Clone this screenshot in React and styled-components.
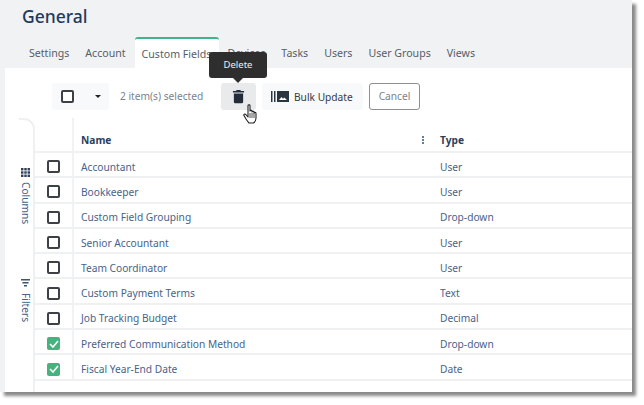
import React from "react";
import styled, { createGlobalStyle } from "styled-components";

const FONT = `"Noto Sans", "Open Sans", sans-serif`;
const Global = createGlobalStyle`
  html, body { margin: 0; padding: 0; background: #fff; }
  body { font-family: ${FONT}; width: 644px; height: 405px; overflow: hidden; }
`;
const Window = styled.div`
  position: relative; width: 632px; height: 392px; background: #f1f2f4;
  box-shadow: 4px 4px 3px #8a8a8a; display: flex; flex-direction: column;
`;
const Header = styled.header`height: 68px; display: flex; flex-direction: column; flex: none;`;
const Title = styled.h1`
  margin: 0; padding: 4px 0 0 22px; height: 33px; box-sizing: border-box;
  font-size: 17.5px; line-height: 25px; font-weight: 500; color: #1f3a5c;
`;
const Tabs = styled.nav`display: flex; padding: 4px 0 0 21px; height: 31px;`;
const Tab = styled.div`
  box-sizing: border-box; height: 31px; padding: 8px 8px 0; font-size: 10.6px; line-height: 16px;
  color: #565d68; white-space: nowrap;
  ${p => p.$active && `background:#fff; border-top:2px solid #3fb58a; border-radius:3px 3px 0 0; padding:7px 0 0 7px; width:84px; margin:0 1px 0 1px; overflow:hidden;`}
`;
const Body = styled.main`flex: 1; margin-left: 5px; background: #fff; display: flex; flex-direction: column; min-height: 0;`;
const Toolbar = styled.div`display: flex; align-items: center; height: 27px; margin: 15px 0 8px 47px; flex: none;`;
const SelectBox = styled.div`
  width: 57px; height: 27px; background: #f8f9fa; border-radius: 3px; display: flex; align-items: center;
  padding-left: 9px; box-sizing: border-box;
`;
const Caret = styled.span`
  margin-left: 21px; width: 0; height: 0; border-left: 3px solid transparent; border-right: 3px solid transparent; border-top: 3px solid #222;
`;
const Selected = styled.span`margin: 0 17px 0 11px; font-size: 10.2px; color: #7b828c; white-space: nowrap; width: 84px; position: relative; top: -1px;`;
const IconBtn = styled.button`
  width: 35px; height: 27px; border: 0; padding: 0; background: #e9eaec; border-radius: 3px; display: flex; align-items: center; justify-content: center;
`;
const BulkBtn = styled.button`
  margin-left: 6px; width: 101px; height: 27px; border: 0; background: #f8f9fa; border-radius: 3px; display: flex; align-items: center; gap: 5px;
  padding: 0 0 0 9px; font: 10.2px ${FONT}; color: #333b47; white-space: nowrap;
`;
const CancelBtn = styled.button`
  margin-left: 6px; width: 51px; height: 27px; box-sizing: border-box; border: 1px solid #8d8f93; border-radius: 3px; background: #fff; padding: 0 0 2px;
  font: 10.2px ${FONT}; color: #7b828c;
`;
const Content = styled.div`flex: 1; display: flex; min-height: 0;`;
const Side = styled.aside`
  position: relative; width: 30px; flex: none; box-sizing: border-box; border-right: 2px solid #eff0f2; margin-top: 12px;
  display: flex; flex-direction: column; align-items: center; padding: 38px 0 0 12px; gap: 55px;
  &::before {
    content: ""; position: absolute; right: -2px; top: -12px; width: 16px; height: 12px; box-sizing: border-box;
    border-top: 2px solid #eff0f2; border-right: 2px solid #eff0f2; border-top-right-radius: 11px;
  }
`;
const SideItem = styled.div`
  writing-mode: vertical-rl; font-size: 10.2px; line-height: 11px; display: flex; align-items: center; gap: ${p => p.$gap}px; color: #47638a;
`;
const TableWrap = styled.div`flex: 1; min-width: 0;`;
const Row = styled.div`
  display: grid; grid-template-columns: 39px 366px 1fr; height: ${p => p.$h || 25.3}px; box-sizing: border-box; border-bottom: 2px solid #eff0f2;
  font-size: 10.2px; color: #47638a;
  font-weight: ${p => p.$head ? 700 : 400};
  & > div { display: flex; align-items: center; padding-top: ${p => p.$pt || 4}px; box-sizing: border-box; white-space: nowrap; }
`;
const CheckCell = styled.div`justify-content: center; border-right: 2px solid #f1f2f4;`;
const NameCell = styled.div`padding-left: 7px; padding-right: 16px; justify-content: space-between; ${p => p.$head && "color:#2b3f5c;"}`;
const TypeCell = styled.div`${p => p.$head && "color:#2b3f5c;"}`;
const Box = styled.span`
  width: 13px; height: 13px; box-sizing: border-box; border-radius: 2px; display: inline-flex; align-items: center; justify-content: center; flex: none;
  ${p => p.$on ? "background:#46b37f;" : "border:2px solid #3d4045; background:#fff;"}
`;
const Kebab = styled.span`display: flex; flex-direction: column; gap: 1px; i { width: 2px; height: 2px; background: #39506f; border-radius: 50%; display: block; }`;
const Tooltip = styled.div`
  position: absolute; left: 209px; top: 52px; width: 58px; height: 26px; background: #2e2e2e; border-radius: 3px; color: #eee; font-size: 9.5px;
  display: flex; align-items: center; justify-content: center; padding-bottom: 2px; box-sizing: border-box;
  &::after { content: ""; position: absolute; left: 24px; top: 26px; border-left: 5px solid transparent; border-right: 5px solid transparent; border-top: 5px solid #2e2e2e; }
`;
const Cursor = styled.svg`position: absolute; left: 243px; top: 104px;`;

const rows = [
  ["Accountant", "User"], ["Bookkeeper", "User"], ["Custom Field Grouping", "Drop-down"], ["Senior Accountant", "User"],
  ["Team Coordinator", "User"], ["Custom Payment Terms", "Text"], ["Job Tracking Budget", "Decimal"],
  ["Preferred Communication Method", "Drop-down", true], ["Fiscal Year-End Date", "Date", true],
];

export default function App() {
  return (
    <>
      <Global />
      <Window>
        <Header>
          <Title>General</Title>
          <Tabs>
            <Tab>Settings</Tab>
            <Tab>Account</Tab>
            <Tab $active>Custom Fields</Tab>
            <Tab>Devices</Tab>
            <Tab>Tasks</Tab>
            <Tab>Users</Tab>
            <Tab>User Groups</Tab>
            <Tab>Views</Tab>
          </Tabs>
        </Header>
        <Body>
          <Toolbar>
            <SelectBox><Box /><Caret /></SelectBox>
            <Selected>2 item(s) selected</Selected>
            <IconBtn aria-label="Delete">
              <svg width="13" height="15" viewBox="0 0 14 15"><path d="M5 0.500h4l.7 1.200H13v1.600H1V1.700h3.300zM2 4.300h10v9.200c0 .7-.5 1.200-1.200 1.200H3.200c-.7 0-1.200-.5-1.200-1.200z" fill="#232d3a"/></svg>
            </IconBtn>
            <BulkBtn>
              <svg width="18" height="12" viewBox="0 0 18 12"><path d="M0 0h1.500v11H0zM3 0h1.500v11H3zM6 0h12v11H6z" fill="#2c3440"/><path d="M8 9l2.500-3 1.500 1.700 1.200-1.200L16 9z" fill="#fff"/></svg>
              Bulk Update
            </BulkBtn>
            <CancelBtn>Cancel</CancelBtn>
          </Toolbar>
          <Content>
            <Side>
              <SideItem $gap={5}>
                <svg width="9" height="9" viewBox="0 0 11 11" fill="#2f4058">{[0,4,8].flatMap(x => [0,4,8].map(y => <rect key={`${x}${y}`} x={x} y={y} width="3" height="3" />))}</svg>
                Columns
              </SideItem>
              <SideItem $gap={6}>
                <svg width="9" height="8" viewBox="0 0 9 8" fill="#3f5470"><rect x="0" y="0" width="9" height="1.500" /><rect x="1.500" y="3" width="6" height="1.500" /><rect x="3" y="6" width="3" height="1.500" /></svg>
                Filters
              </SideItem>
            </Side>
            <TableWrap>
              <Row $head $h={35} $pt={10}>
                <CheckCell />
                <NameCell $head>Name<Kebab><i /><i /><i /></Kebab></NameCell>
                <TypeCell $head>Type</TypeCell>
              </Row>
              {rows.map(([n, t, on]) => (
                <Row key={n}>
                  <CheckCell>
                    <Box $on={on}>{on && <svg width="10" height="8" viewBox="0 0 10 8"><path d="M1 4l3 3 5-6" stroke="#fff" strokeWidth="1.600" fill="none" /></svg>}</Box>
                  </CheckCell>
                  <NameCell>{n}</NameCell>
                  <TypeCell>{t}</TypeCell>
                </Row>
              ))}
            </TableWrap>
          </Content>
        </Body>
        <Tooltip>Delete</Tooltip>
        <Cursor width="16" height="20" viewBox="0 0 16 20">
          <path d="M5 1.500c0-1 2-1 2 0V7l0 0c0-1 2-1 2 0v1c0-1 2-1 2 0v1c0-1 2-.8 2 .2V14c0 2-1 4-2.500 5H6c-1-1-2-2.500-3-4L1 11.500c-.6-1 .8-2 1.800-1L5 13z" fill="#fff" stroke="#222" strokeWidth="1.100" strokeLinejoin="round"/>
          <path d="M7 9v5M9 9v5M11 9v5" stroke="#222" strokeWidth=".8"/>
        </Cursor>
      </Window>
    </>
  );
}
